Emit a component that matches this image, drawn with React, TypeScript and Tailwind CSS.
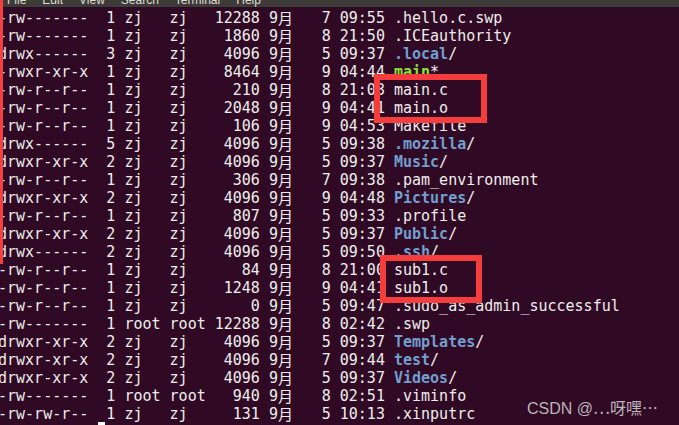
type Entry = {
  perms: string;
  links: string;
  owner: string;
  size: string;
  day: string;
  time: string;
  name: string;
  kind?: "dir" | "exec";
};

const entries: Entry[] = [
  { perms: "-rw-------", links: "1", owner: "zj", size: "12288", day: "7", time: "09:55", name: ".hello.c.swp" },
  { perms: "-rw-------", links: "1", owner: "zj", size: "1860", day: "8", time: "21:50", name: ".ICEauthority" },
  { perms: "drwx------", links: "3", owner: "zj", size: "4096", day: "5", time: "09:37", name: ".local", kind: "dir" },
  { perms: "-rwxr-xr-x", links: "1", owner: "zj", size: "8464", day: "9", time: "04:44", name: "main", kind: "exec" },
  { perms: "-rw-r--r--", links: "1", owner: "zj", size: "210", day: "8", time: "21:03", name: "main.c" },
  { perms: "-rw-r--r--", links: "1", owner: "zj", size: "2048", day: "9", time: "04:41", name: "main.o" },
  { perms: "-rw-r--r--", links: "1", owner: "zj", size: "106", day: "9", time: "04:53", name: "Makefile" },
  { perms: "drwx------", links: "5", owner: "zj", size: "4096", day: "5", time: "09:38", name: ".mozilla", kind: "dir" },
  { perms: "drwxr-xr-x", links: "2", owner: "zj", size: "4096", day: "5", time: "09:37", name: "Music", kind: "dir" },
  { perms: "-rw-r--r--", links: "1", owner: "zj", size: "306", day: "7", time: "09:38", name: ".pam_environment" },
  { perms: "drwxr-xr-x", links: "2", owner: "zj", size: "4096", day: "9", time: "04:48", name: "Pictures", kind: "dir" },
  { perms: "-rw-r--r--", links: "1", owner: "zj", size: "807", day: "5", time: "09:33", name: ".profile" },
  { perms: "drwxr-xr-x", links: "2", owner: "zj", size: "4096", day: "5", time: "09:37", name: "Public", kind: "dir" },
  { perms: "drwx------", links: "2", owner: "zj", size: "4096", day: "5", time: "09:50", name: ".ssh", kind: "dir" },
  { perms: "-rw-r--r--", links: "1", owner: "zj", size: "84", day: "8", time: "21:00", name: "sub1.c" },
  { perms: "-rw-r--r--", links: "1", owner: "zj", size: "1248", day: "9", time: "04:41", name: "sub1.o" },
  { perms: "-rw-r--r--", links: "1", owner: "zj", size: "0", day: "5", time: "09:47", name: ".sudo_as_admin_successful" },
  { perms: "-rw-------", links: "1", owner: "root", size: "12288", day: "8", time: "02:42", name: ".swp" },
  { perms: "drwxr-xr-x", links: "2", owner: "zj", size: "4096", day: "5", time: "09:37", name: "Templates", kind: "dir" },
  { perms: "drwxr-xr-x", links: "2", owner: "zj", size: "4096", day: "7", time: "09:44", name: "test", kind: "dir" },
  { perms: "drwxr-xr-x", links: "2", owner: "zj", size: "4096", day: "5", time: "09:37", name: "Videos", kind: "dir" },
  { perms: "-rw-------", links: "1", owner: "root", size: "940", day: "8", time: "02:51", name: ".viminfo" },
  { perms: "-rw-rw-r--", links: "1", owner: "zj", size: "131", day: "5", time: "10:13", name: ".xinputrc" },
];

function Row({ e }: { e: Entry }) {
  const head = `${e.perms} ${e.links.padStart(2)} ${e.owner.padEnd(4)} ${e.owner.padEnd(4)} ${e.size.padStart(5)} 9`;
  const tail = `   ${e.day} ${e.time} `;

  return (
    <div className="h-[18px] whitespace-pre">
      {head}
      <span className="inline-block w-[2ch] align-top font-['Noto_Sans_CJK_SC',sans-serif] text-[15px] leading-[18px]">月</span>
      {tail}
      {e.kind === "dir" ? (
        <>
          <span className="font-bold text-[#729fcf]">{e.name}</span>/
        </>
      ) : e.kind === "exec" ? (
        <>
          <span className="font-bold text-[#8ae234]">{e.name}</span>*
        </>
      ) : (
        e.name
      )}
    </div>
  );
}

export default function App() {
  return (
    <div className="relative h-[425px] w-[679px] overflow-hidden bg-[#300a24]">
      {/* menu bar, mostly scrolled off the top */}
      <div className="h-[7px] overflow-hidden bg-[#3c3b37]">
        <div className="-mt-[6px] flex gap-[16px] pl-[7px] font-['Liberation_Sans',sans-serif] text-[12px] leading-[12px] text-[#dfdbd2]">
          <span>File</span>
          <span>Edit</span>
          <span>View</span>
          <span>Search</span>
          <span>Terminal</span>
          <span>Help</span>
        </div>
      </div>

      <div className="-ml-[2px] pt-[2px] font-['DejaVu_Sans_Mono',monospace] text-[15px] leading-[18px] text-[#eeeeec]">
        {entries.map((e) => (
          <Row key={e.name} e={e} />
        ))}
      </div>

      {/* annotations */}
      <div className="absolute left-0 top-0 h-[264px] w-[3px] bg-[#f44040]" />
      <div className="absolute left-[374px] top-[74px] h-[49px] w-[113px] border-[6px] border-[#f53d3d]" />
      <div className="absolute left-[380px] top-[255px] h-[48px] w-[102px] border-[6px] border-[#f53d3d]" />
      <div className="absolute left-[98px] top-[422px] h-[3px] w-[7px] bg-white" />

      <div className="absolute left-[527px] top-[397px] whitespace-nowrap font-['Liberation_Sans',sans-serif] text-[16px] leading-[20px] text-[#bdb4b9]">
        CSDN @<span className="font-['Noto_Sans_CJK_SC',sans-serif]">⋯呀嘿⋯</span>
      </div>
    </div>
  );
}
